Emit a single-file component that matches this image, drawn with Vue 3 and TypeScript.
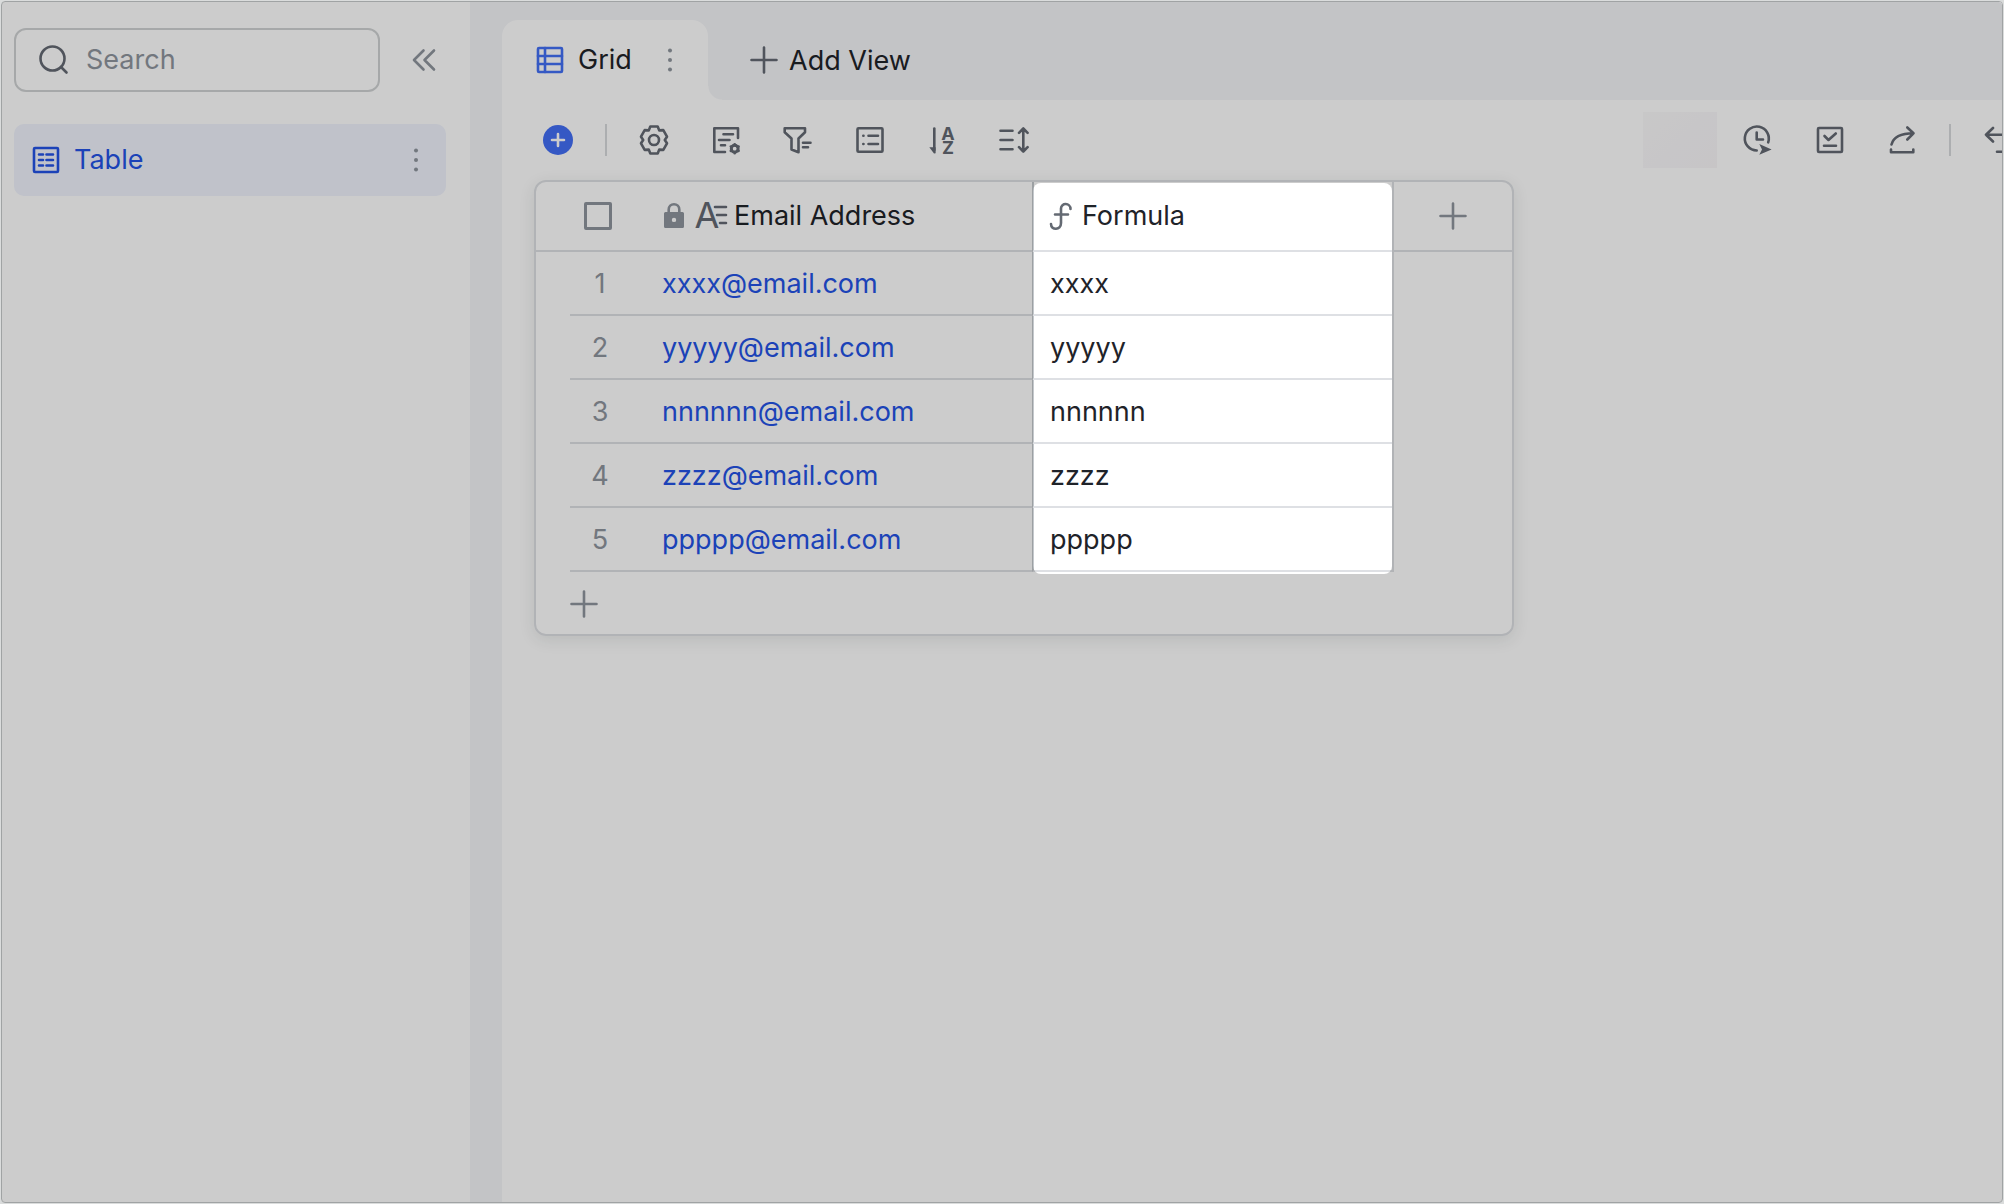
<script setup lang="ts">
import { ref } from 'vue'

interface RecordRow {
  id: number
  email: string
  formula: string
}

const query = ref('')
const allSelected = ref(false)

const rows: RecordRow[] = [
  { id: 1, email: 'xxxx@email.com', formula: 'xxxx' },
  { id: 2, email: 'yyyyy@email.com', formula: 'yyyyy' },
  { id: 3, email: 'nnnnnn@email.com', formula: 'nnnnnn' },
  { id: 4, email: 'zzzz@email.com', formula: 'zzzz' },
  { id: 5, email: 'ppppp@email.com', formula: 'ppppp' },
]
</script>

<template>
  <div class="page">
    <div class="frame">
      <aside class="sidebar">
        <div class="search-row">
          <label class="search">
            <svg class="icon dark" viewBox="0 0 32 32" aria-hidden="true">
              <circle cx="14.500" cy="14.500" r="12" />
              <path d="M23 23L28.500 28.500" />
            </svg>
            <input v-model="query" type="text" placeholder="Search" aria-label="Search" />
          </label>
          <button class="plain" aria-label="Collapse sidebar">
            <svg class="icon light" viewBox="0 0 32 32"><path d="M15.5 6.5L6 16l9.500 9.500M26 6.500L16.500 16l9.500 9.500" /></svg>
          </button>
        </div>
        <nav>
          <div class="nav-item">
            <a href="#table">
              <svg class="icon" viewBox="0 0 32 32" aria-hidden="true">
                <rect x="4" y="4" width="24" height="24" rx="1" />
                <path d="M9 10.500h4M9 16h4M9 21.500h4M16.500 10.500h6.500M16.500 16h6.500M16.500 21.500h6.500" />
              </svg>
              Table
            </a>
            <button class="plain" aria-label="Table options">
              <svg class="icon dots" viewBox="0 0 32 32"><circle cx="16" cy="6.500" r="2" /><circle cx="16" cy="16" r="2" /><circle cx="16" cy="25.500" r="2" /></svg>
            </button>
          </div>
        </nav>
      </aside>

      <main class="main">
        <div class="tabs">
          <div class="tab">
            <a href="#grid">
              <svg class="icon grid-icon" viewBox="0 0 32 32" aria-hidden="true">
                <rect x="4" y="4" width="24" height="24" rx="1" />
                <path d="M11 4v24M4 12h24M4 20h24" />
              </svg>
              Grid
            </a>
            <button class="plain" aria-label="View options">
              <svg class="icon dots" viewBox="0 0 32 32"><circle cx="16" cy="6.500" r="2" /><circle cx="16" cy="16" r="2" /><circle cx="16" cy="25.500" r="2" /></svg>
            </button>
          </div>
          <button class="plain add-view">
            <svg class="icon" viewBox="0 0 32 32" aria-hidden="true"><path d="M16 3.500v25M3.500 16h25" /></svg>
            <span>Add View</span>
          </button>
        </div>

        <div class="toolbar">
          <div class="tools">
            <button class="plain" aria-label="Add record">
              <svg class="icon add" viewBox="0 0 32 32"><circle cx="16" cy="16" r="15" /><path d="M16 10v12M10 16h12" /></svg>
            </button>
            <span class="rule"></span>
            <div class="tool-group">
              <button class="plain" aria-label="Settings">
                <svg class="icon" viewBox="0 0 32 32">
                  <path d="M12.300 2.500H19.700L21.200 6.400 25.300 6.100 29 12.700 26.800 16 29 19.300 25.300 25.900 21.200 25.600 19.700 29.500H12.300L10.800 25.600 6.700 25.900 3 19.300 5.200 16 3 12.700 6.700 6.100 10.800 6.400Z" />
                  <circle cx="16" cy="16" r="5" />
                </svg>
              </button>
              <button class="plain" aria-label="Customize fields">
                <svg class="icon" viewBox="0 0 32 32">
                  <path d="M28 14V4.300H4.300V28H15M13.500 10.300H23M9 16H19.500M11 21.300H15" />
                  <circle class="cog" cx="24.700" cy="24.700" r="3.400" />
                  <path d="M24.700 20.200v1M24.700 28.200v1M20.800 22.500l.9.500M27.700 26.400l.9.500M20.800 26.900l.9-.5M27.700 23l.9-.5" />
                </svg>
              </button>
              <button class="plain" aria-label="Filter">
                <svg class="icon" viewBox="0 0 32 32"><path d="M2.700 4.300H23V8.300L16.500 14.500V28.300L9.500 25.500V14.500L2.700 8.300ZM21 18.700H28.500M21 23.300H26" /></svg>
              </button>
              <button class="plain" aria-label="Group">
                <svg class="icon" viewBox="0 0 32 32">
                  <rect x="3.500" y="4.300" width="25" height="23.400" rx="1" />
                  <path d="M9.300 11.700h.2M9.300 20h.2M14.500 11.700H24M14.500 20H24" />
                </svg>
              </button>
              <button class="plain" aria-label="Sort">
                <svg class="icon" viewBox="0 0 32 32">
                  <path d="M8.300 4.500V26" />
                  <path class="solid" d="M3.300 23.300H9.600V29.300L8 29.500Z" />
                  <text x="22" y="15.500" class="az">A</text>
                  <text x="22" y="30" class="az">Z</text>
                </svg>
              </button>
              <button class="plain" aria-label="Row height">
                <svg class="icon" viewBox="0 0 32 32"><path d="M2.500 6.700H14.500M2.500 16H14.500M2.500 25.300H14.500M25.300 4.500V27.500M21 8.800L25.300 4.500 29.600 8.800M21 23.200L25.300 27.500 29.600 23.200" /></svg>
              </button>
            </div>
          </div>

          <div class="tools">
            <div class="tool-group">
              <span class="avatars"></span>
              <button class="plain" aria-label="History">
                <svg class="icon" viewBox="0 0 32 32">
                  <path d="M14.700 26.500A12 12 0 1 1 26.200 18.300M14.700 8.500V15.500H21" />
                  <path class="solid" d="M17.300 20L29.600 25.500 17.300 30.800 20 25.500Z" />
                </svg>
              </button>
              <button class="plain" aria-label="Tasks">
                <svg class="icon" viewBox="0 0 32 32">
                  <rect x="4" y="4" width="24" height="24" rx="1" />
                  <path d="M10.500 12L14.500 16 21.800 9.500M10 21.700H22" />
                </svg>
              </button>
              <button class="plain" aria-label="Share">
                <svg class="icon" viewBox="0 0 32 32"><path d="M5.500 20.500C7.500 13 14.500 9.300 27.500 9.300M21.300 3.500L27.500 9.300 21.300 15.500M5 25.500V28.300H27.300V25.500" /></svg>
              </button>
            </div>
            <span class="rule"></span>
            <button class="plain undo" aria-label="Undo">
              <svg class="icon" viewBox="0 0 32 32"><path d="M11 4L4 10.700 11 17.500M4 10.700H22A8 8 0 0 1 22 27.700H15" /></svg>
            </button>
          </div>
        </div>

        <div class="sheet">
          <table>
            <colgroup>
              <col class="c-gutter" />
              <col class="c-index" />
              <col class="c-email" />
              <col class="c-formula" />
              <col class="c-add" />
            </colgroup>
            <thead>
              <tr>
                <th></th>
                <th class="index"><input v-model="allSelected" type="checkbox" aria-label="Select all records" /></th>
                <th class="email" scope="col">
                  <div class="head">
                    <svg class="lock" viewBox="0 0 24 32" aria-hidden="true">
                      <path d="M6.700 14V9.500a5.300 5.300 0 0 1 10.600 0V14" />
                      <path class="solid" fill-rule="evenodd" d="M3.500 12H20.500A1.500 1.500 0 0 1 22 13.500V26.500A1.500 1.500 0 0 1 20.500 28H3.500A1.500 1.500 0 0 1 2 26.500V13.500A1.500 1.500 0 0 1 3.500 12ZM12 17.700a2.200 2.200 0 1 0 0 4.400a2.200 2.200 0 1 0 0-4.400Z" />
                    </svg>
                    <svg class="type" viewBox="0 0 32 32" aria-hidden="true">
                      <text x="13" y="28" class="big-a">A</text>
                      <path d="M21 7H32M23 15H32M26 23H32" />
                    </svg>
                    Email Address
                  </div>
                </th>
                <th class="formula" scope="col">
                  <div class="head">
                    <svg class="fx" viewBox="0 0 24 32" aria-hidden="true">
                      <path d="M20.500 9C20.500 2.500 11 2.500 11 8.500V23C11 30.500 1 30.500 1 24M5 14.500H18" />
                    </svg>
                    Formula
                  </div>
                  <div class="spotlight"></div>
                </th>
                <th class="add-col">
                  <button class="plain" aria-label="Add field">
                    <svg class="icon light" viewBox="0 0 32 32"><path d="M16 3.500v25M3.500 16h25" /></svg>
                  </button>
                </th>
              </tr>
            </thead>
            <tbody>
              <tr v-for="(row, i) in rows" :key="row.id">
                <td class="gutter"></td>
                <td class="index">{{ row.id }}</td>
                <td class="email"><a :href="'mailto:' + row.email">{{ row.email }}</a></td>
                <td class="formula">{{ row.formula }}</td>
                <td v-if="i === 0" class="blank" :rowspan="rows.length"></td>
              </tr>
            </tbody>
            <tfoot>
              <tr>
                <td></td>
                <td colspan="4">
                  <button class="plain add-row" aria-label="Add record">
                    <svg class="icon light" viewBox="0 0 32 32"><path d="M16 3.500v25M3.500 16h25" /></svg>
                  </button>
                </td>
              </tr>
            </tfoot>
          </table>
        </div>
      </main>
    </div>
  </div>
</template>

<style>
body {
  background: #dadcdc;
}
</style>

<style scoped>
.page {
  --ink: #1f2329;
  --icon: #646a73;
  --muted: #8f959e;
  --line: #dee0e4;
  --chrome: #f4f5f8;
  --link: #2453e6;
  box-sizing: border-box;
  min-height: 100vh;
  padding: 1px;
  display: flex;
  font-family: Inter, 'Liberation Sans', sans-serif;
  font-size: 27px;
  line-height: 36px;
  color: var(--ink);
}

.page * {
  box-sizing: border-box;
}

.frame {
  flex: 1;
  min-width: 0;
  display: flex;
  overflow: hidden;
  border: 1px solid #a0a3a4;
  border-radius: 4px;
  background: #fff;
}

.plain {
  display: flex;
  align-items: center;
  padding: 0;
  border: 0;
  background: none;
  font: inherit;
  color: var(--icon);
  cursor: pointer;
}

a {
  color: inherit;
  text-decoration: none;
}

svg {
  display: block;
  flex: none;
  overflow: visible;
  fill: none;
  stroke: currentColor;
  stroke-width: 2.6;
  stroke-linecap: round;
  stroke-linejoin: round;
}

.icon {
  width: 32px;
  height: 32px;
}

.dark {
  color: var(--icon);
}

.light {
  color: var(--muted);
}

.solid {
  fill: currentColor;
  stroke: none;
}

.dots {
  fill: var(--muted);
  stroke: none;
}

/* sidebar */
.sidebar {
  flex: none;
  width: 468px;
  padding: 26px 24px 0 12px;
}

.search-row {
  display: flex;
  align-items: center;
  gap: 28px;
}

.search {
  flex: none;
  display: flex;
  align-items: center;
  gap: 16px;
  width: 366px;
  height: 64px;
  padding: 0 22px;
  border: 2px solid #d0d3d4;
  border-radius: 12px;
}

.search input {
  flex: 1;
  min-width: 0;
  padding: 0;
  border: 0;
  outline: 0;
  background: none;
  font: inherit;
  color: inherit;
}

.search input::placeholder {
  color: var(--muted);
  opacity: 1;
}

.nav-item {
  display: flex;
  align-items: center;
  justify-content: space-between;
  height: 72px;
  margin-top: 32px;
  padding: 0 14px 0 16px;
  border-radius: 10px;
  background: #f0f3fd;
  color: var(--link);
}

.nav-item a,
.tab a {
  display: flex;
  align-items: center;
  gap: 12px;
}

/* view tabs */
.main {
  flex: 1;
  min-width: 0;
  border-left: 32px solid var(--chrome);
}

.tabs {
  display: flex;
  height: 98px;
  padding-top: 18px;
  background: var(--chrome);
}

.tab {
  position: relative;
  display: flex;
  align-items: center;
  justify-content: space-between;
  width: 206px;
  padding: 0 22px 0 32px;
  border-radius: 16px 16px 0 0;
  background: #fff;
}

.tab::after {
  content: '';
  position: absolute;
  left: 100%;
  bottom: 0;
  width: 14px;
  height: 14px;
  background: radial-gradient(circle at 100% 0, transparent 13px, #fff 14px);
}

.grid-icon {
  color: #4370f6;
}

.add-view {
  gap: 9px;
  padding-left: 40px;
  color: var(--ink);
}

.add-view svg {
  color: var(--icon);
}

.add-view span {
  padding-top: 2px;
}

/* toolbar */
.toolbar {
  display: flex;
  align-items: center;
  justify-content: space-between;
  height: 80px;
  padding-left: 40px;
}

.tools {
  display: flex;
  align-items: center;
  gap: 31px;
}

.tool-group {
  display: flex;
  align-items: center;
  gap: 40px;
}

.rule {
  width: 2px;
  height: 32px;
  background: #d8dadc;
}

.add circle {
  fill: #436ef5;
  stroke: none;
}

.add path {
  stroke: #fff;
}

.cog {
  stroke-width: 3;
}

.az {
  font-size: 18px;
  font-weight: 700;
  text-anchor: middle;
  fill: currentColor;
  stroke: none;
}

.avatars {
  width: 74px;
  height: 56px;
  margin-right: -15px;
  background: linear-gradient(135deg, #fbfafb, #f9f8fb 50%, #f9f7f8);
}

.undo {
  width: 20px;
  overflow: hidden;
}

/* data grid */
.sheet {
  width: 980px;
  margin-left: 32px;
  border: 2px solid var(--line);
  border-radius: 12px;
  box-shadow: 0 4px 16px rgba(31, 45, 41, 0.1);
}

table {
  width: 100%;
  table-layout: fixed;
  border-collapse: separate;
  border-spacing: 0;
}

.c-gutter {
  width: 34px;
}

.c-index {
  width: 60px;
}

.c-email {
  width: 402px;
}

.c-formula {
  width: 362px;
}

th,
td {
  padding: 0;
  font-weight: 400;
  text-align: left;
  border-bottom: 2px solid var(--line);
}

th {
  height: 70px;
}

td {
  height: 64px;
  padding-top: 2px;
}

.gutter,
.blank,
tfoot td {
  border-bottom: 0;
}

tfoot td {
  height: 62px;
}

.index {
  text-align: center;
  color: var(--muted);
}

.index input {
  appearance: none;
  display: block;
  width: 28px;
  height: 28px;
  margin: 0 14px;
  border: 3px solid var(--muted);
  border-radius: 2px;
}

.index input:checked {
  background: var(--muted);
}

.email {
  padding-left: 32px;
}

td.email {
  color: var(--link);
}

.formula {
  position: relative;
  padding-left: 16px;
  border-left: 2px solid #c4c8cc;
  border-right: 2px solid var(--line);
}

.head {
  display: flex;
  align-items: center;
  gap: 8px;
}

.lock {
  width: 24px;
  height: 32px;
  color: var(--muted);
}

.type {
  width: 32px;
  height: 32px;
  color: var(--icon);
}

.big-a {
  font-size: 36px;
  text-anchor: middle;
  fill: currentColor;
  stroke: none;
}

.fx {
  width: 24px;
  height: 32px;
  color: var(--icon);
}

/* dims the page and leaves the formula column lit */
.spotlight {
  position: absolute;
  z-index: 5;
  top: 1px;
  left: -1px;
  right: 0;
  height: 391px;
  border-radius: 8px;
  box-shadow: 0 0 0 3000px rgba(0, 0, 0, 0.2);
  pointer-events: none;
}

.add-col .plain {
  margin: 0 auto;
}

.add-row {
  margin-left: -2px;
}
</style>
